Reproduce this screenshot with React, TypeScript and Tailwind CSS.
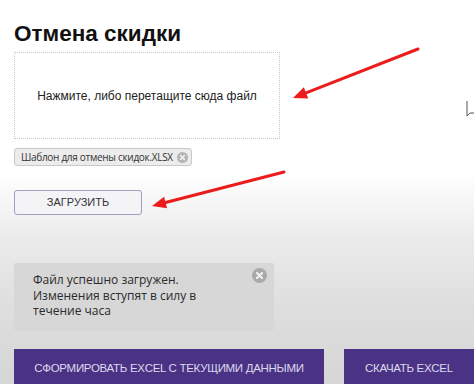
import React from 'react'

const CloseDot: React.FC<{ size: number; className?: string }> = ({ size, className }) => (
  <svg width={size} height={size} viewBox="0 0 16 16" className={className}>
    <circle cx="8" cy="8" r="8" fill="currentColor" />
    <path d="M5.3 5.3 L10.7 10.7 M10.7 5.3 L5.3 10.7" stroke="#f2f2f2" strokeWidth="2.2" strokeLinecap="round" />
  </svg>
)

// Красные стрелки и курсор поверх скриншота
const Arrow: React.FC<{ x1: number; y1: number; x2: number; y2: number }> = ({ x1, y1, x2, y2 }) => {
  const a = Math.atan2(y2 - y1, x2 - x1)
  const len = 14
  const w = 6
  const bx = x2 - Math.cos(a) * len
  const by = y2 - Math.sin(a) * len
  const px = -Math.sin(a) * w
  const py = Math.cos(a) * w
  return (
    <g>
      <line x1={x1} y1={y1} x2={bx} y2={by} stroke="#ec1c1c" strokeWidth="3" strokeLinecap="round" />
      <polygon points={`${x2},${y2} ${bx + px},${by + py} ${bx - px},${by - py}`} fill="#ec1c1c" />
    </g>
  )
}

export default function App() {
  return (
    <div
      className="relative w-[474px] h-[384px] overflow-hidden bg-[linear-gradient(180deg,#ffffff_0%,#ffffff_45%,#ebebeb_62%,#dedede_80%,#d6d6d6_100%)]"
      style={{ fontFamily: '"Liberation Sans", Arial, sans-serif' }}
    >
      <div className="flex flex-col pl-[14px] pt-[20px]">
        <h1 className="text-[22.5px] leading-[28px] font-bold text-[#111]">Отмена скидки</h1>

        <div className="mt-[4px] w-[266px] h-[87px] border border-dotted border-[#c8c8c8] flex items-center justify-center">
          <span className="text-[12px] text-[#222]">Нажмите, либо перетащите сюда файл</span>
        </div>

        <div className="mt-[9px] self-start h-[18px] flex items-center gap-[4px] pl-[6px] pr-[3px] bg-[#ececec] border border-[#c9c9c9] rounded-[3px]">
          <span className="text-[10px] text-[#333] tracking-[-0.3px]" style={{ fontFamily: '"Open Sans", sans-serif' }}>
            Шаблон для отмены скидок.XLSX
          </span>
          <CloseDot size={11} className="text-[#b5b5b5]" />
        </div>

        <button className="mt-[24px] w-[128px] h-[25px] rounded-[3px] border-[1.5px] border-[#a39dbf] bg-[#f4f4f7] text-[11px] text-[#333] flex items-center justify-center">
          ЗАГРУЗИТЬ
        </button>

        <div className="relative mt-[48px] w-[260px] h-[68px] bg-[#d7d7d7] rounded-[2px] pl-[19px] pt-[9px]">
          <p className="text-[12px] leading-[15.5px] text-[#2a2a2a] w-[190px]" style={{ fontFamily: '"Open Sans", sans-serif' }}>
            Файл успешно загружен. Изменения вступят в силу в течение часа
          </p>
          <CloseDot size={15} className="absolute right-[7px] top-[5px] text-[#a9a9a9]" />
        </div>

        <div className="mt-[18px] flex gap-[20px]">
          <button className="shrink-0 w-[310px] h-[40px] bg-[#4a3384] text-[11.5px] text-[#ddd8ee] flex items-start justify-center pt-[11px] tracking-[-0.3px]">
            СФОРМИРОВАТЬ EXCEL С ТЕКУЩИМИ ДАННЫМИ
          </button>
          <button className="shrink-0 w-[140px] h-[40px] bg-[#4a3384] text-[11.5px] text-[#ddd8ee] flex items-start justify-start pl-[21px] pt-[11px] tracking-[-0.3px]">
            СКАЧАТЬ EXCEL
          </button>
        </div>
      </div>

      <svg className="absolute inset-0 pointer-events-none" width="474" height="384">
        <Arrow x1={418} y1={49} x2={293} y2={98} />
        <Arrow x1={284} y1={172} x2={152} y2={206} />
        <path d="M467 101 L467 116 L470 113 L474 113" fill="#fff" stroke="#555" strokeWidth="1" />
      </svg>
    </div>
  )
}
